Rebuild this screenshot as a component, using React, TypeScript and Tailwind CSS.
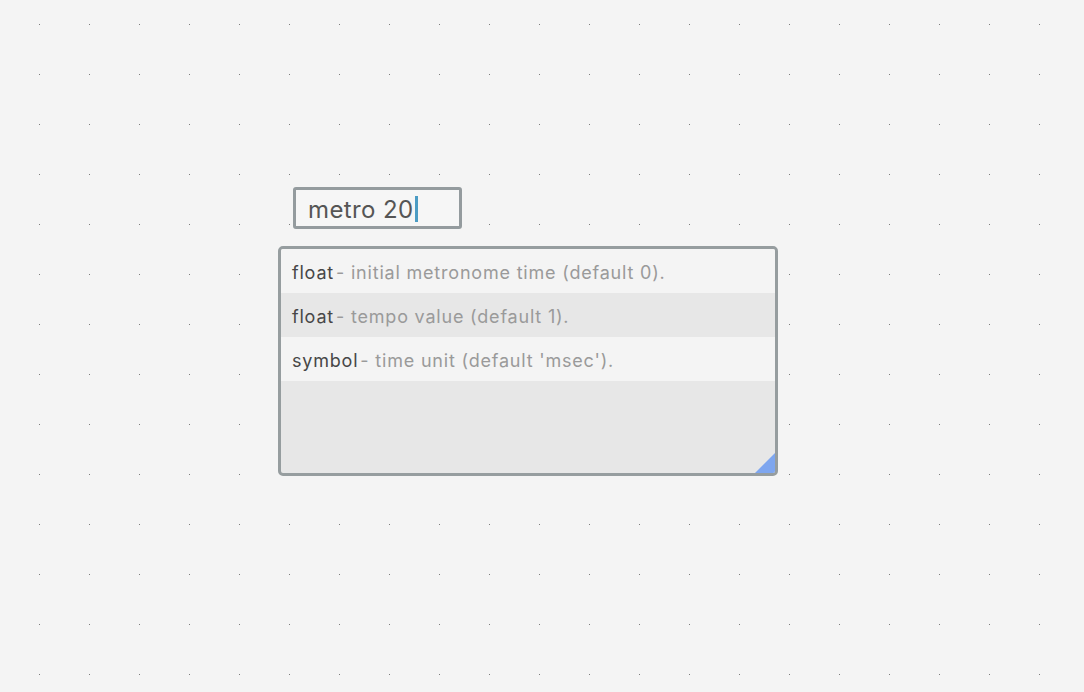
import React from 'react';

const args = [
  { type: 'float', desc: 'initial metronome time (default 0).' },
  { type: 'float', desc: 'tempo value (default 1).' },
  { type: 'symbol', desc: "time unit (default 'msec')." },
];

export default function App() {
  return (
    <div
      className="relative w-[1084px] h-[692px] overflow-hidden bg-[#f4f4f4]"
      style={{ fontFamily: 'Inter, "Noto Sans", sans-serif' }}
    >
      {/* canvas grid */}
      <svg className="absolute inset-0" width="1084" height="692">
        <defs>
          <pattern id="grid" x="39" y="24" width="50" height="50" patternUnits="userSpaceOnUse">
            <rect x="0" y="0" width="1" height="1" fill="#7c7c7c" />
          </pattern>
        </defs>
        <rect width="1084" height="692" fill="url(#grid)" />
      </svg>

      <div className="relative flex flex-col pt-[187px] pl-[278px]">
        {/* object box being edited */}
        <div className="ml-[15px] w-[169px] h-[42px] border-[3px] border-[#949b9e] rounded-[3px] bg-[#f6f6f6] flex items-center pl-[12px] pt-[3px]">
          <span className="text-[24px] leading-none text-[#555] tracking-[0.4px]">metro 20</span>
          <span className="ml-[1px] -mt-[2px] w-[3px] h-[26px] bg-[#4b9cc4]" />
        </div>

        {/* argument suggestions */}
        <div className="relative mt-[17px] w-[500px] h-[230px] border-[3px] border-[#969d9f] rounded-[5px] bg-[#e7e7e7] overflow-hidden">
          {args.map((a, i) => (
            <div
              key={i}
              className={`h-[44px] flex items-center pl-[11px] pt-[2px] text-[18px] tracking-[0.8px] ${i % 2 === 0 ? 'bg-[#f4f4f4]' : 'bg-[#e7e7e7]'}`}
            >
              <span className="text-[#474747]">{a.type}</span>
              <span className="ml-[2px] text-[#9a9a9a]">- {a.desc}</span>
            </div>
          ))}
          <svg className="absolute right-0 bottom-0" width="20" height="20" viewBox="0 0 20 20">
            <polygon points="20,0 20,20 0,20" fill="#7ea6ef" />
          </svg>
        </div>
      </div>
    </div>
  );
}
